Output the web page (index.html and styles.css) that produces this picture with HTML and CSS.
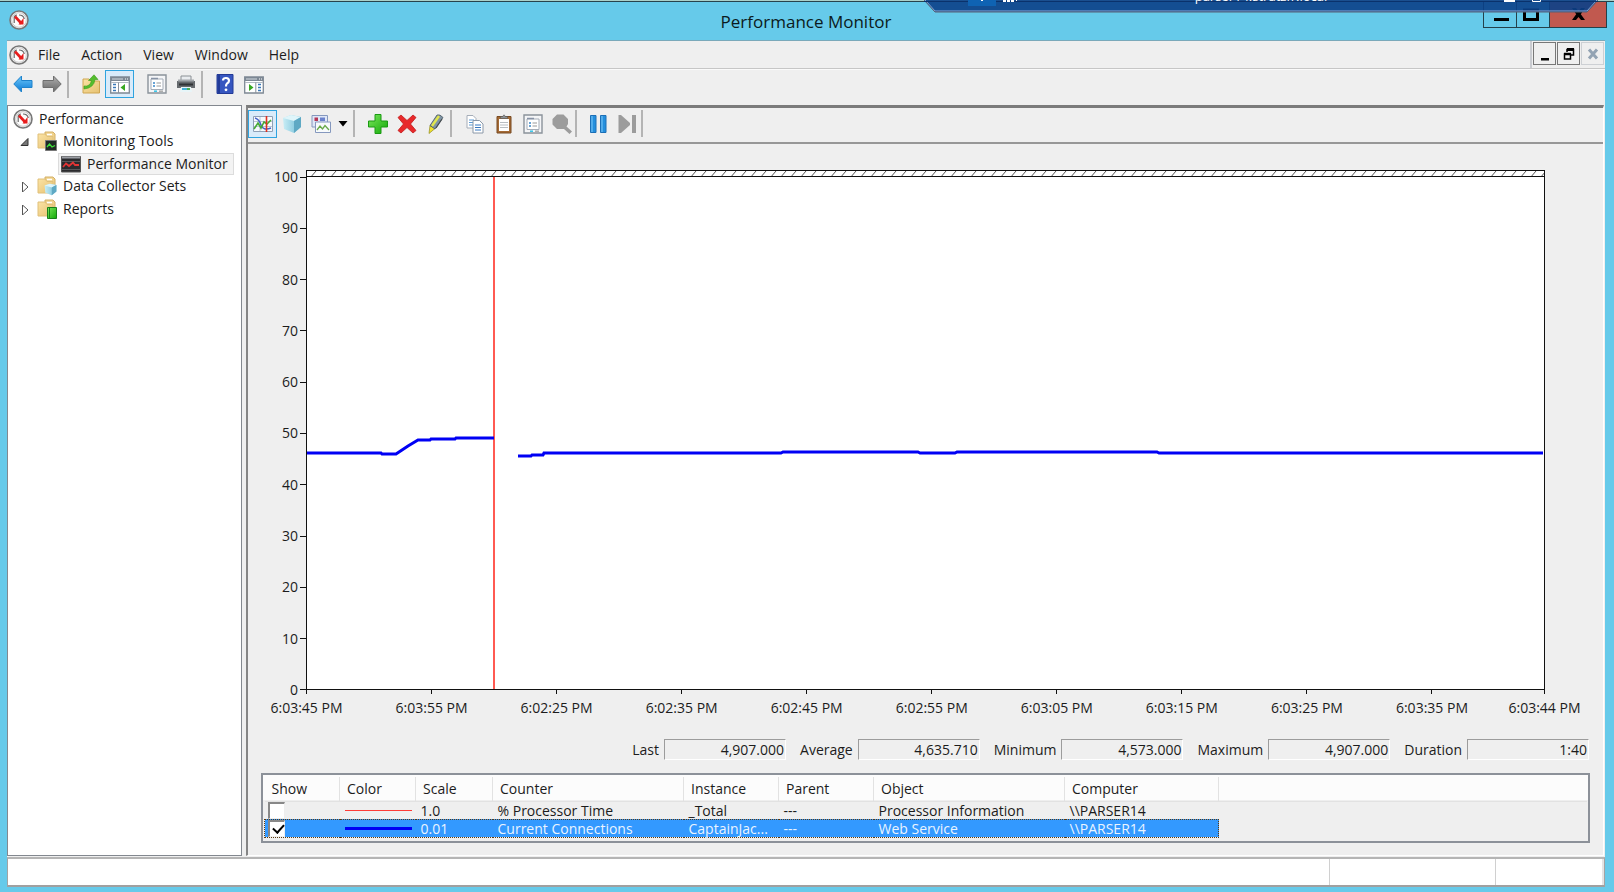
FILE: index.html
```html
<!DOCTYPE html>
<html lang="en">
<head>
<meta charset="utf-8">
<title>Performance Monitor</title>
<link rel="stylesheet" href="styles.css">
</head>
<body>
<svg class="defs" aria-hidden="true">
  <defs>
    <linearGradient id="gBlue" x1="0" y1="0" x2="0" y2="1"><stop offset="0" stop-color="#6cc8fa"/><stop offset="1" stop-color="#0a78d4"/></linearGradient>
    <linearGradient id="gGrey" x1="0" y1="0" x2="0" y2="1"><stop offset="0" stop-color="#b0b0b0"/><stop offset="1" stop-color="#666"/></linearGradient>
    <linearGradient id="gFold" x1="0" y1="0" x2="1" y2="1"><stop offset="0" stop-color="#fbe3a4"/><stop offset="1" stop-color="#e6c172"/></linearGradient>
    <linearGradient id="gGreen" x1="0" y1="0" x2="1" y2="1"><stop offset="0" stop-color="#7be85c"/><stop offset="1" stop-color="#12a808"/></linearGradient>
    <linearGradient id="gCube" x1="0" y1="0" x2="1" y2="0"><stop offset="0" stop-color="#c9edf5"/><stop offset="1" stop-color="#6fbcd6"/></linearGradient>
    <pattern id="hatch" width="10" height="7" patternUnits="userSpaceOnUse"><path d="M3 7L9 0" stroke="#555" fill="none"/></pattern>
    <symbol id="perf" viewBox="0 0 20 20">
      <circle cx="10" cy="10" r="9" fill="#fdfdfd" stroke="#777" stroke-width="1.6"/>
      <circle cx="10" cy="10" r="7.3" fill="none" stroke="#c9c9c9" stroke-width="1"/>
      <path d="M5.200 13V7Q6 5 8 5M10 5Q14.500 5 15.300 9" fill="none" stroke="#6a6a6a" stroke-width="1.2"/>
      <path d="M6 6.500L12.500 13.500" stroke="#e81c1c" stroke-width="2.600" fill="none"/>
      <path d="M14.500 8V14.500H9.500Z" fill="#e81c1c"/>
    </symbol>
    <symbol id="folder" viewBox="0 0 20 20">
      <path d="M8 1H16L18 3V15H8Z" fill="#f0d28c" stroke="#d4b066"/>
      <path d="M10 3.500H15" stroke="#fff" stroke-width="1.500"/>
      <path d="M1 3H8L10 5.500H16V17H1Z" fill="url(#gFold)" stroke="#e0c07a"/>
    </symbol>
    <symbol id="cube" viewBox="0 0 20 20">
      <path d="M1 4L9 1L19 3V13L12 19L2 15Z" fill="url(#gCube)"/>
      <path d="M1 4L9 1L19 3L12 7Z" fill="#dff5fa"/>
      <path d="M12 7L19 3V13L12 19Z" fill="#5fa9c4"/>
    </symbol>
    <symbol id="props" viewBox="0 0 20 20">
      <path d="M1 1H19V19H1Z" fill="#f4f5f7" stroke="#8b939b" stroke-width="1.400"/>
      <path d="M4 5H16V15.500H4Z" fill="#fff" stroke="#a5adb8"/>
      <path d="M4 4.500H11" stroke="#8792a5" stroke-width="1.500"/>
      <path d="M6 9H8M6 12H8" stroke="#3a86c8" stroke-width="1.500"/><path d="M9.500 9H14M9.500 12H14" stroke="#999"/>
      <path d="M7 17.200H10" stroke="#35c4e8" stroke-width="1.500"/><path d="M12 17.200H16" stroke="#aaa" stroke-width="1.500"/>
    </symbol>
    <symbol id="pane" viewBox="0 0 20 18">
      <path d="M.7 1H19.300V17H.7Z" fill="#fff" stroke="#7d8894" stroke-width="1.300"/>
      <path d="M1 1H19V5H1Z" fill="#7d8894"/><path d="M2 3H13" stroke="#d5dae0"/><path d="M15 3H18" stroke="#fff" stroke-dasharray="1 1"/>
      <path d="M1 6.500H19" stroke="#b5bcc4"/>
    </symbol>
  </defs>
</svg>

<div class="window">
  <header class="titlebar">
    <svg class="app-icon"><use href="#perf"/></svg>
    <h1 class="title">Performance Monitor</h1>
    <div class="caption">
      <button class="cap" aria-label="Minimize"><svg viewBox="0 0 32 26"><path d="M10 16H25V19H10Z"/></svg></button>
      <button class="cap" aria-label="Maximize"><svg viewBox="0 0 32 26"><path d="M7.500 8H20.500V17.500H7.500Z" fill="none" stroke="#000" stroke-width="3"/></svg></button>
      <button class="cap close" aria-label="Close"><svg viewBox="0 0 32 26"><path d="M10 6H14L16.500 9.500L19 6H23L18.800 12.200L23 18H19L16.500 15L14 18H10L14.200 12.200Z"/></svg></button>
    </div>
  </header>

  <div class="frame">
    <div class="menubar">
      <nav class="menu">
        <svg class="app-icon"><use href="#perf"/></svg>
        <button>File</button><button>Action</button><button>View</button><button>Window</button><button>Help</button>
      </nav>
      <div class="mdi">
        <button aria-label="Minimize child"><svg viewBox="0 0 20 20"><path d="M6 14H14V16.500H6Z"/></svg></button>
        <button aria-label="Restore child"><svg viewBox="0 0 20 20"><path d="M8 8V5.500H14.500V11H12" fill="none" stroke="#000" stroke-width="1.500"/><path d="M8 5.500H15" stroke="#000" stroke-width="3"/><path d="M5.500 10H11.500V15H5.500Z" fill="#efefef" stroke="#000" stroke-width="1.500"/><path d="M5 10H12" stroke="#000" stroke-width="2.500"/></svg></button>
        <button class="off" aria-label="Close child"><svg viewBox="0 0 20 20"><path d="M6 5.500L14 14.500M14 5.500L6 14.500" stroke="#93a3b3" stroke-width="3"/></svg></button>
      </div>
    </div>

    <div class="toolbar">
      <button aria-label="Back"><svg viewBox="0 0 20 20"><path d="M.8 10L8.500 2V6.500H19V13.500H8.500V18Z" fill="url(#gBlue)" stroke="#1f83cc"/></svg></button>
      <button aria-label="Forward"><svg viewBox="0 0 20 20"><path d="M19.200 10L11.500 2V6.500H1V13.500H11.500V18Z" fill="url(#gGrey)" stroke="#6e6e6e"/></svg></button>
      <i class="sep"></i>
      <button aria-label="Up one level"><svg viewBox="0 0 20 20"><path d="M2 5H8L10 7H18.500V19H2Z" fill="url(#gFold)" stroke="#cfa651"/><path d="M3 12Q9 13 10.500 6.500H7.500L13 .8L17 5.500H14Q13 14 3 15Z" fill="#54bd2d" stroke="#3b9a1d" stroke-width=".6"/></svg></button>
      <button class="on" aria-label="Show console tree"><svg viewBox="0 0 20 20"><use href="#pane" y="2" width="20" height="18"/><path d="M3 10.500H6M3 13.500H6M3 16.500H6" stroke="#3978b8" stroke-width="1.500"/><path d="M8.500 8.500V19" stroke="#8a929c"/><path d="M15 10V17L10.500 13.500Z" fill="#38a821"/></svg></button>
      <i class="space"></i>
      <button aria-label="Properties"><svg viewBox="0 0 20 20"><use href="#props"/></svg></button>
      <button aria-label="Print"><svg viewBox="0 0 20 20"><path d="M5 2H15V8H5Z" fill="#e9ecef" stroke="#8b9095"/><path d="M1 7H19V14H1Z" fill="#666a6e"/><path d="M2 6.500H18" stroke="#a2a7ab" stroke-width="2"/><path d="M3 10.500H17" stroke="#303336" stroke-width="2"/><path d="M5 13H15L16 18H4Z" fill="#e8f5f8"/><path d="M6 15H11" stroke="#47b2d9" stroke-width="2"/><path d="M11 15H14" stroke="#4dad57" stroke-width="2"/></svg></button>
      <i class="sep"></i>
      <button aria-label="Help"><svg viewBox="0 0 20 20"><path d="M2 .5H18V19.500H2Z" fill="#3656c0" stroke="#233a96"/><path d="M2.500 1H5V19H2.500Z" fill="#223b99"/><path d="M8 6.500Q8 4 11 4T14 6.800Q14 8.500 12 9.500Q11 10.300 11 12.500" fill="none" stroke="#fff" stroke-width="2.200"/><circle cx="11" cy="15.800" r="1.400" fill="#fff"/></svg></button>
      <button aria-label="Show action pane"><svg viewBox="0 0 20 20"><use href="#pane" y="2" width="20" height="18"/><path d="M14 10.500H17M14 13.500H17M14 16.500H17" stroke="#3978b8" stroke-width="1.500"/><path d="M11.800 8.500V19" stroke="#8a929c"/><path d="M5 10V17L9.500 13.500Z" fill="#38a821"/></svg></button>
    </div>

    <div class="panes">
      <ul class="tree">
        <li><svg class="ico"><use href="#perf"/></svg><span>Performance</span></li>
        <li class="l1"><svg class="arrow" viewBox="0 0 10 10"><path d="M8 1.500V8.500H1Z" fill="#777" stroke="#333"/></svg><svg class="ico" viewBox="0 0 20 20"><use href="#folder"/><path d="M8.500 9.500H19.500V19.500H8.500Z" fill="#202a26" stroke="#777"/><path d="M10 16L12.500 13L15 16L18 14.500" stroke="#3fe03a" stroke-width="1.300" fill="none"/></svg><span>Monitoring Tools</span></li>
        <li class="l2"><a class="sel" href="#graph"><svg class="ico" viewBox="0 0 20 20"><path d="M.5 2.500H19.500V18H.5Z" fill="#2b2b2e" stroke="#555"/><path d="M1 3.500H19" stroke="#9b9ea4" stroke-width="2"/><path d="M1 7.500H19M1 15.500H19" stroke="#57585a"/><path d="M2 13L5 9.500L8 12L12 8.500L14 11H18" stroke="#e23434" stroke-width="1.800" fill="none"/></svg><span>Performance Monitor</span></a></li>
        <li class="l1"><svg class="arrow" viewBox="0 0 10 10"><path d="M2.500 0L8 5L2.500 10Z" fill="#fff" stroke="#555"/></svg><svg class="ico" viewBox="0 0 20 20"><use href="#folder"/><use href="#cube" x="7" y="7" width="13" height="13"/></svg><span>Data Collector Sets</span></li>
        <li class="l1"><svg class="arrow" viewBox="0 0 10 10"><path d="M2.500 0L8 5L2.500 10Z" fill="#fff" stroke="#555"/></svg><svg class="ico" viewBox="0 0 20 20"><use href="#folder"/><path d="M10.500 8.500H19.500V19.500H10.500Z" fill="url(#gGreen)" stroke="#18801a"/><path d="M12.500 9V19" stroke="#18801a"/></svg><span>Reports</span></li>
      </ul>

      <main class="view" id="graph">
        <div class="viewbar">
          <button class="on" aria-label="View current activity"><svg viewBox="0 0 20 20"><path d="M.5 2.500H19.500V17.500H.5Z" fill="#f7fafc" stroke="#8fa0b6"/><path d="M1 7.500H19M1 12.500H19M7 3V17" stroke="#b9c7d5"/><path d="M2 4Q6 5 8 11T18 14" stroke="#4763c8" stroke-width="1.500" fill="none"/><path d="M1 15L5 9L8 14L11 8L14 10L18 6" stroke="#46aa35" stroke-width="1.600" fill="none"/><path d="M13.500 2V18" stroke="#e03020" stroke-width="1.600"/></svg></button>
          <button aria-label="View log data"><svg viewBox="0 0 20 20"><use href="#cube"/></svg></button>
          <button aria-label="Change graph type"><svg viewBox="0 0 20 20"><path d="M1 1.500H16.500V13H1Z" fill="#dfe7f7" stroke="#8598be"/><path d="M3.500 3.500H7V7H3.500Z" fill="#b53555"/><path d="M9 3.500H14V7H9Z" fill="#6b82cc"/><path d="M4.500 8H19.500V18.500H4.500Z" fill="#f7fafc" stroke="#8598be"/><path d="M6 16L9 12L11.500 15L14 11.500L18 16" stroke="#68a948" stroke-width="1.300" fill="none"/></svg></button>
          <button class="drop" aria-label="Graph types"><svg viewBox="0 0 10 6"><path d="M.5 0H9.500L5 5.500Z"/></svg></button>
          <i class="sep"></i>
          <button aria-label="Add counter"><svg viewBox="0 0 20 20"><path d="M7 .5H13V7H19.500V13H13V19.500H7V13H.5V7H7Z" fill="url(#gGreen)" stroke="#1a9a12"/></svg></button>
          <button aria-label="Delete counter"><svg viewBox="0 0 20 20"><path d="M1 3.500L4 1L10 6.500L16 1L19 3.500L13.500 10L19 16.500L16 19L10 13.500L4 19L1 16.500L6.500 10Z" fill="#e8292b" stroke="#c01c1c" stroke-width=".8"/></svg></button>
          <button aria-label="Highlight"><svg viewBox="0 0 20 20"><path d="M3 19.500L4 11.500L9 14.500Z" fill="#f1e22e" stroke="#8f8a24" stroke-width=".7"/><path d="M4 11.500L11 1Q14 0 17 3.500L9 15Z" fill="#7f94a5" stroke="#45545f" stroke-width=".8"/><path d="M6 12L13 2" stroke="#e2e64c" stroke-width="2.400"/><path d="M10 14L16 5" stroke="#474c4e" stroke-width="1.200"/></svg></button>
          <i class="sep"></i>
          <button aria-label="Copy properties"><svg viewBox="0 0 20 20"><path d="M2 1.500H8L11 4.500V14H2Z" fill="#fff" stroke="#a5adb8"/><path d="M4 6H9M4 8.500H9M4 11H9" stroke="#5d9bd5"/><path d="M8 6.500H14.500L18 10V19H8Z" fill="#fff" stroke="#8b98a8"/><path d="M10 11H16M10 13.500H16M10 16H16" stroke="#3878c0"/></svg></button>
          <button aria-label="Paste counter list"><svg viewBox="0 0 20 20"><path d="M3 2.500H17V19H3Z" fill="#a46a35" stroke="#784a22"/><path d="M5 5H15V17H5Z" fill="#fff"/><path d="M6 8.500H14M6 11H14M6 13.500H14" stroke="#b8bdc2"/><path d="M6.500 4.500V2.500H8.500L10 .8L11.500 2.500H13.500V4.500Z" fill="#898f94" stroke="#555" stroke-width=".6"/></svg></button>
          <button aria-label="Counter properties"><svg viewBox="0 0 20 20"><use href="#props"/></svg></button>
          <button aria-label="Zoom" disabled><svg viewBox="0 0 20 20"><path d="M5 .5H11.500L16 5V10L14.500 12.500L20 17.500L17.500 20L12 15H5L.5 10.500V5Z" fill="#9c9c9c"/></svg></button>
          <i class="sep tight"></i>
          <button aria-label="Freeze display"><svg viewBox="0 0 20 20"><path d="M2.500 1.500H8V18.500H2.500ZM12.500 1.500H18V18.500H12.500Z" fill="#248fdd" stroke="#1c6fb6"/><path d="M4 2V18M14 2V18" stroke="#60b7f0" stroke-width="1.500"/></svg></button>
          <button aria-label="Update data" disabled><svg viewBox="0 0 20 20"><path d="M1.500 1H4L13 9V11L4 19H1.500ZM15 1H19V19H15Z" fill="#9c9c9c"/></svg></button>
          <i class="sep"></i>
        </div>

        <section class="chart">
          <div class="yaxis"><span>100</span><span>90</span><span>80</span><span>70</span><span>60</span><span>50</span><span>40</span><span>30</span><span>20</span><span>10</span><span>0</span></div>
          <div class="plotbox">
            <svg class="hatch"><rect width="100%" height="100%" fill="url(#hatch)"/></svg>
            <svg class="plot" viewBox="0 0 1237 512" preserveAspectRatio="none">
              <path class="now" d="M187 0V512"/>
              <path class="conn" d="M0 276H74L75 277H89L101 269L111 263H123L124 262H148L149 261H187M211 279H224L225 278H236L237 276H474L476 275H611L613 276H648L650 275H850L852 276H1236"/>
            </svg>
          </div>
          <div class="xaxis"><span>6:03:45 PM</span><span>6:03:55 PM</span><span>6:02:25 PM</span><span>6:02:35 PM</span><span>6:02:45 PM</span><span>6:02:55 PM</span><span>6:03:05 PM</span><span>6:03:15 PM</span><span>6:03:25 PM</span><span>6:03:35 PM</span><span>6:03:44 PM</span></div>
        </section>

        <dl class="stats">
          <dt>Last</dt><dd>4,907.000</dd>
          <dt>Average</dt><dd>4,635.710</dd>
          <dt>Minimum</dt><dd>4,573.000</dd>
          <dt>Maximum</dt><dd>4,907.000</dd>
          <dt>Duration</dt><dd>1:40</dd>
        </dl>

        <div class="legend">
          <table>
            <colgroup><col class="c-show"><col class="c-color"><col class="c-scale"><col class="c-counter"><col class="c-inst"><col class="c-parent"><col class="c-object"><col class="c-comp"><col></colgroup>
            <thead><tr><th>Show</th><th>Color</th><th>Scale</th><th>Counter</th><th>Instance</th><th>Parent</th><th>Object</th><th>Computer</th><th></th></tr></thead>
            <tbody>
              <tr><td><input type="checkbox" aria-label="Show % Processor Time"></td><td><i class="swatch red"></i></td><td>1.0</td><td>% Processor Time</td><td>_Total</td><td>---</td><td>Processor Information</td><td>\\PARSER14</td><td></td></tr>
              <tr class="picked"><td><input type="checkbox" aria-label="Show Current Connections" checked></td><td><i class="swatch blue"></i></td><td>0.01</td><td>Current Connections</td><td>CaptainJac...</td><td>---</td><td>Web Service</td><td>\\PARSER14</td><td></td></tr>
            </tbody>
          </table>
        </div>
      </main>
    </div>

    <footer class="status"><span></span><span></span><span></span></footer>
  </div>

  <div class="remote">
    <svg class="remote-shape" viewBox="0 0 674 13"><path d="M0 0H674L663 12H11Z" fill="#0b4088" fill-opacity=".9"/><path d="M1 0L11 11H663L673 0" fill="none" stroke="#88aadd"/><path d="M0 0L11 12H663L674 0" fill="none" stroke="#566176"/><path d="M0 1.500H674" stroke="#0a326c"/><path d="M44 0H72V6H44Z" fill="#0f63b3"/><path d="M57 0H59V1H57ZM79 0H82V2H79ZM83 0H86V2H83ZM87 0H90V2H87ZM92 0H93V1H92Z" fill="#fff"/><path d="M580 0H591V2H580Z" fill="#fff"/><path d="M608.500 0V1.500H616.500V0" fill="none" stroke="#fff"/></svg>
    <span class="host">parser14.stratzfr.local</span>
  </div>
</div>
</body>
</html>
```
FILE: styles.css
```css
* { box-sizing: border-box; }
body { margin: 0; background: #66caea; color: #1c1c1c; font: 14px/20px "Open Sans", "Noto Sans", sans-serif; }
button { font: inherit; color: inherit; background: none; border: 0; padding: 0; margin: 0; display: flex; align-items: center; justify-content: center; }
.defs { position: absolute; width: 0; height: 0; }

.window { position: relative; height: 100vh; display: flex; flex-direction: column; padding: 0 9px 5px 7px; border-top: 1px solid #a9cfc9; }
.window::before { content: ""; position: absolute; left: 0; right: 0; top: 0; height: 1px; background: #27434c; }
.titlebar { display: grid; grid-template-columns: 1fr auto 1fr; height: 39px; }
.titlebar .app-icon { margin: 9px 0 0 2px; }
.app-icon { width: 20px; height: 20px; }
.title { margin: 0; padding-top: 10px; font-size: 17px; line-height: 22px; font-weight: 400; color: #0b1a20; }
.caption { justify-self: end; display: flex; height: 27px; margin-right: -2px; border: 1px solid #24414b; }
.cap { width: 33px; border-right: 1px solid #24414b; }
.cap svg { width: 32px; height: 26px; }
.close { width: 56px; background: #c1594f; border-right: 0; }

.frame { flex: 1; min-height: 0; display: flex; flex-direction: column; background: #efefef; border-top: 1px solid #7aa9ba; }
.menubar { display: flex; justify-content: space-between; height: 28px; border-bottom: 1px solid #c6c6c6; }
.menu { display: flex; align-items: center; gap: 21px; padding-left: 2px; }
.menu .app-icon { margin-right: -12px; }
.mdi { display: flex; gap: 1px; padding: 1px 1px 3px 1px; border-left: 2px solid #c9cbd0; }
.mdi button { width: 23px; height: 23px; border: 1px solid #777; }
.mdi .off { border-color: #cdd0d4; }
.mdi svg { width: 20px; height: 20px; }

.toolbar, .viewbar { display: flex; align-items: center; }
.toolbar { height: 36px; padding: 0 0 7px 1px; border-top: 1px solid #fafafa; }
.toolbar button, .viewbar button { width: 29px; height: 28px; }
.toolbar svg, .viewbar svg { width: 20px; height: 20px; }
.toolbar .on, .viewbar .on { background: #d9ebfa; border: 1px solid #2fa3df; }
.sep { width: 2px; height: 27px; margin-right: 8px; background: #b4b4b4; }
.toolbar .sep { margin: 0 7px 0 1px; }
.space { width: 8px; }

.panes { flex: 1; min-height: 0; display: flex; gap: 4px; }
.tree { width: 235px; margin: 0; padding: 1px 0 0 5px; list-style: none; background: #fff; border: 1px solid #83888f; }
.tree li { display: flex; align-items: center; height: 23px; }
.tree li:nth-child(even) { height: 22px; }
.tree li > span { padding-left: 6px; }
.tree .ico { width: 20px; height: 20px; flex: none; }
.arrow { width: 10px; height: 10px; margin: 2px 7px 0 7px; }
.l2 { padding-left: 45px; }
.sel { display: flex; align-items: center; gap: 6px; height: 22px; padding: 0 5px 0 2px; background: #f3f3f3; border: 1px solid #dcdcdc; color: inherit; text-decoration: none; white-space: nowrap; }

.view { flex: 1; min-width: 0; display: flex; flex-direction: column; border-top: 3px solid #7b7b7b; border-left: 2px solid #858585; border-right: 1px solid #fff; border-bottom: 1px solid #fff; margin-right: 1px; }
.viewbar { height: 35px; padding: 0 0 4px 0; margin-top: 1px; border-bottom: 2px solid #979797; }
.viewbar .drop { width: 15px; }
.viewbar .drop svg { width: 10px; height: 6px; }
.drop + .sep { margin-left: 3px; }
.viewbar .tight { margin: 0 6px 0 -1px; }

.chart { flex: 1; min-height: 0; display: grid; grid-template-columns: 58px minmax(0, 1fr); grid-template-rows: minmax(0, 1fr) auto; padding: 26px 58px 0 0; }
.yaxis { display: flex; flex-direction: column; justify-content: space-between; padding-top: 7px; text-align: right; }
.yaxis span { display: flex; align-items: center; justify-content: flex-end; gap: 2px; height: 0; }
.yaxis span::after { content: ""; width: 6px; height: 1px; background: #111; }
.plotbox { display: flex; flex-direction: column; background: #fff; border: 1px solid #111; }
.hatch { width: 100%; height: 6px; border-bottom: 1px solid #111; flex: none; }
.plot { display: block; width: 100%; flex: 1; min-height: 0; }
.now { fill: none; stroke: #ff5a52; stroke-width: 2; shape-rendering: crispEdges; }
.conn { fill: none; stroke: #0000f4; stroke-width: 3; }
.xaxis { grid-column: 2; display: grid; grid-template-columns: repeat(9, minmax(0, 10fr)) minmax(0, 9fr) 0; height: 49px; margin-right: 1px; }
.xaxis span { display: flex; flex-direction: column; align-items: center; width: 1px; gap: 4px; white-space: nowrap; }
.xaxis span::before { content: ""; width: 1px; height: 4px; background: #111; flex: none; }

.stats { display: flex; justify-content: flex-end; align-items: center; margin: 0 14px 13px 0; }
.stats dt { margin-left: 14px; }
.stats dd { width: 122px; height: 21px; margin: 0 0 0 5px; padding-right: 1px; text-align: right; border: 1px solid; border-color: #9c9c9c #fff #fff #9c9c9c; }

.legend { height: 70px; margin: 0 13px 12px 13px; padding: 2px 1px; border: 2px solid #8c9199; background: linear-gradient(#fcfcfc 25px, #efefef 25px); }
table { width: 100%; table-layout: fixed; border-collapse: collapse; }
th { height: 24px; padding: 0 0 0 7px; text-align: left; font-weight: 400; border-right: 1px solid #e2e2e2; border-bottom: 1px solid #e2e2e2; }
th:last-child { border-right: 0; }
td { height: 18px; padding: 0 0 0 5px; line-height: 17px; white-space: nowrap; }
td:first-child { padding-left: 3px; }
.c-show { width: 75px; } .c-color { width: 76px; } .c-scale { width: 77px; } .c-counter { width: 191px; }
.c-inst, .c-parent { width: 95px; } .c-object { width: 191px; } .c-comp { width: 154px; }
td input { appearance: none; display: block; width: 17px; height: 17px; margin: 0; background: #fff; border: 1px solid #eee; border-top: 2px solid #888; border-left: 2px solid #888; }
td input:checked::before { content: ""; display: block; width: 5px; height: 9px; margin: 0 0 0 5px; border: solid #000; border-width: 0 2px 2px 0; transform: rotate(42deg); }
.swatch { display: block; width: 67px; }
.red { height: 1px; background: #ff3b36; }
.blue { height: 3px; background: #0000f4; }
.picked td { background: #3399ff; color: #eaf4ff; border-top: 1px dotted #5b3a10; border-bottom: 1px dotted #5b3a10; }
.picked td:first-child { border-left: 1px dotted #5b3a10; }
.picked td:nth-child(8) { border-right: 1px dotted #5b3a10; }
.picked td:last-child { background: none; border: 0; }

.status { display: flex; height: 30px; margin-top: 1px; background: #fff; border: 1px solid #a3a3a3; border-top: 2px solid #b5b5b5; border-bottom: 2px solid #a0a0a0; }
.status span { border-right: 1px solid #d0d0d0; }
.status span:nth-child(1) { flex: 1; }
.status span:nth-child(2) { width: 166px; }
.status span:nth-child(3) { width: 108px; border-right: 2px solid #e4e4e4; }

.remote { position: absolute; top: -1px; right: 16px; width: 674px; height: 13px; overflow: hidden; text-align: center; }
.remote-shape { position: absolute; inset: 0; width: 100%; height: 100%; }
.host { position: relative; display: block; margin-top: -13px; color: #fff; font-size: 13px; line-height: 18px; }
```
